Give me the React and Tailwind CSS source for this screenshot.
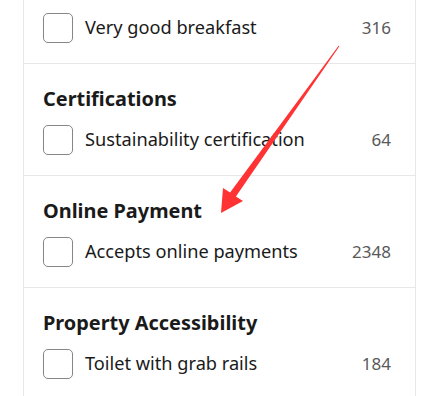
import React from 'react';

const sections = [
  { title: 'Certifications', label: 'Sustainability certification', count: 64 },
  { title: 'Online Payment', label: 'Accepts online payments', count: 2348 },
  { title: 'Property Accessibility', label: 'Toilet with grab rails', count: 184 },
];

function Row({ label, count }) {
  return (
    <label className="flex h-[30px] items-center gap-3">
      <span className="h-[30px] w-[30px] shrink-0 rounded-[5px] border border-[#868686] bg-white" />
      <span className="flex-1 text-[18.2px] text-[#1a1a1a]">{label}</span>
      <span className="text-[17px] text-[#595959]">{count}</span>
    </label>
  );
}

export default function App() {
  return (
    <div className="relative h-[396px] w-[439px] overflow-hidden bg-white" style={{ fontFamily: '"Noto Sans", "Open Sans", sans-serif' }}>
      <div className="ml-[23px] w-[393px] border-x border-[#e7e7e7]">
        <div className="pt-[13px] pb-[20px] pl-[19px] pr-[24px]">
          <Row label="Very good breakfast" count={316} />
        </div>
        {sections.map((s) => (
          <div key={s.title} className="border-t border-[#e7e7e7] pt-[23px] pb-[20px] pl-[19px] pr-[24px]">
            <h3 className="h-6 text-[19.9px] leading-6 font-bold text-[#1a1a1a]">{s.title}</h3>
            <div className="mt-[14px]">
              <Row label={s.label} count={s.count} />
            </div>
          </div>
        ))}
      </div>
      <svg className="pointer-events-none absolute left-0 top-0" width="439" height="396" viewBox="0 0 439 396">
        <polygon
          points="338.6,45.7 339.4,46.3 235.9,196.5 243,201 221,213 223,188 230.1,192.5"
          fill="#ff3333"
        />
      </svg>
    </div>
  );
}
